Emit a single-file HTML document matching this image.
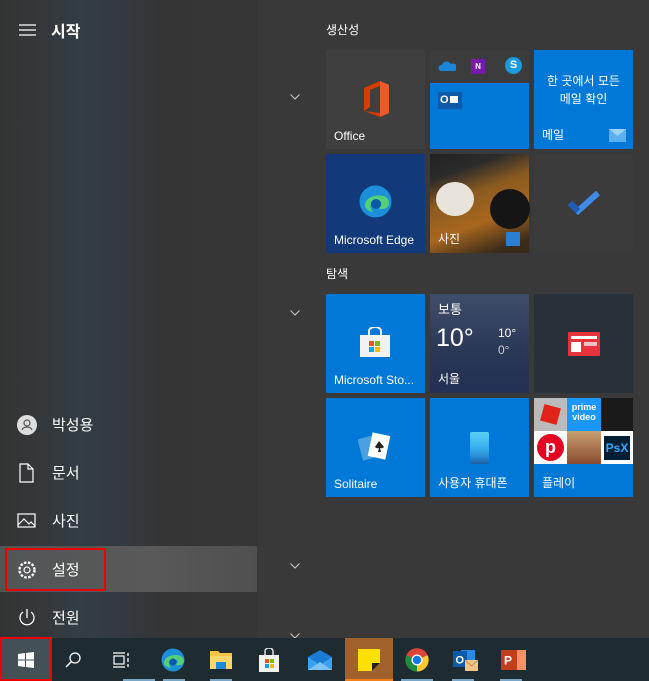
<!DOCTYPE html>
<html><head><meta charset="utf-8"><style>
*{margin:0;padding:0;box-sizing:border-box}
body{width:649px;height:681px;overflow:hidden;background:#393939;font-family:"Liberation Sans","Noto Sans CJK KR",sans-serif;color:#fff;position:relative}
.abs{position:absolute}
#left{left:0;top:0;width:257px;height:638px;background:linear-gradient(90deg,#333 0,#34393d 50px,#323d45 80px,#33393e 130px,#353535 160px,#363636 257px)}
#mid{left:257px;top:0;width:68px;height:638px;background:#393939}
.tile{position:absolute;width:99px;height:99px}
.lbl{position:absolute;left:8px;bottom:6px;font-size:12px;white-space:nowrap}
.item{position:absolute;left:0;width:257px;height:46px;font-size:15px}
.item span{position:absolute;left:52px;top:13px}
.item svg{position:absolute;left:17px;top:14px}
.chev{position:absolute;left:289px;color:#ccc;font-size:10px}
#tb{left:0;top:638px;width:649px;height:43px;background:#1e2b31}
.ti{position:absolute;top:0;width:48px;height:43px;display:flex;align-items:center;justify-content:center}
.ul{position:absolute;bottom:0;height:2px;background:#7aa6c8}
</style></head><body>
<div id="left" class="abs"></div>
<div id="mid" class="abs"></div>

<svg class="abs" style="left:19px;top:24px" width="17" height="12"><path d="M0 1H17M0 6H17M0 11H17" stroke="#fff" stroke-width="1.3"/></svg>
<div class="abs" style="left:51px;top:18px;font-size:16px;font-weight:bold">시작</div>

<svg class="abs" style="left:290px;top:94px" width="10" height="6"><path d="M0.5 0.5L5 5L9.5 0.5" stroke="#ccc" fill="none"/></svg>
<svg class="abs" style="left:290px;top:310px" width="10" height="6"><path d="M0.5 0.5L5 5L9.5 0.5" stroke="#ccc" fill="none"/></svg>
<svg class="abs" style="left:290px;top:563px" width="10" height="6"><path d="M0.5 0.5L5 5L9.5 0.5" stroke="#ccc" fill="none"/></svg>
<svg class="abs" style="left:290px;top:633px" width="10" height="6"><path d="M0.5 0.5L5 5L9.5 0.5" stroke="#ccc" fill="none"/></svg>

<!-- left items -->
<div class="item" style="top:401px"><svg width="20" height="20"><circle cx="10" cy="10" r="10" fill="#ddd"/><circle cx="10" cy="8" r="3" fill="none" stroke="#555" stroke-width="1.2"/><path d="M5 15C6 11 14 11 15 15" fill="none" stroke="#555" stroke-width="1.2"/></svg><span>박성용</span></div>
<div class="item" style="top:449px"><svg width="20" height="20"><path d="M3 1H11L16 6V19H3Z M11 1V6H16" fill="none" stroke="#fff" stroke-width="1.2"/></svg><span>문서</span></div>
<div class="item" style="top:497px"><svg width="20" height="20"><rect x="1" y="3" width="17" height="13" fill="none" stroke="#fff" stroke-width="1.2"/><path d="M1 14L7 8L12 13L14 11L18 15" fill="none" stroke="#fff" stroke-width="1.2"/></svg><span>사진</span></div>
<div class="item" style="top:546px;background:linear-gradient(90deg,#525556,#595959 150px,#4f4f4f)"><svg width="20" height="20"><circle cx="10" cy="10" r="3" fill="none" stroke="#fff" stroke-width="1.2"/><circle cx="10" cy="10" r="7.5" fill="none" stroke="#fff" stroke-width="2.4" stroke-dasharray="2.5 1.5"/></svg><span>설정</span></div>
<div class="abs" style="left:5px;top:548px;width:101px;height:43px;border:2px solid #e00"></div>
<div class="item" style="top:594px"><svg width="20" height="20"><path d="M6 4A7 7 0 1 0 14 4" fill="none" stroke="#fff" stroke-width="1.3"/><path d="M10 1V10" stroke="#fff" stroke-width="1.3"/></svg><span>전원</span></div>

<!-- group headers -->
<div class="abs" style="left:326px;top:21px;font-size:12px">생산성</div>
<div class="abs" style="left:326px;top:265px;font-size:12px">탐색</div>

<!-- row1 -->
<div class="tile" style="left:326px;top:50px;background:#3f3f3f">
<svg class="abs" style="left:34px;top:30px" width="32" height="38"><path d="M4 8L20 1L29 5V33L20 37L4 31L20 33V6L10 10V27L4 31Z" fill="#d83b01"/><path d="M20 1L29 5V33L20 37Z" fill="#eb5a29"/></svg>
<div class="lbl">Office</div></div>
<div class="tile" style="left:430px;top:50px;background:#0078d7">
<div class="abs" style="left:0;top:0;width:99px;height:33px;background:#3c3c3c"></div>
<svg class="abs" style="left:8px;top:11px" width="18" height="10"><path d="M3 10A3 3 0 0 1 4 4A5 5 0 0 1 13 3A4 4 0 0 1 17 10Z" fill="#1a86d9"/></svg>
<div class="abs" style="left:41px;top:9px;width:14px;height:15px;background:#7719aa;font-size:8px;font-weight:bold;text-align:center;line-height:15px">N</div>
<div class="abs" style="left:75px;top:7px;width:17px;height:17px;border-radius:50%;background:#1a9be0;font-size:11px;font-weight:bold;text-align:center;line-height:17px">S</div>
<div class="abs" style="left:8px;top:42px;width:24px;height:17px;background:#0f5aa8;font-size:11px;font-weight:bold;padding-left:2px;line-height:17px">O<span style="display:inline-block;width:8px;height:7px;background:#fff;margin-left:1px"></span></div>
</div>
<div class="tile" style="left:534px;top:50px;background:#0078d7">
<div class="abs" style="left:0;top:22px;width:99px;text-align:center;font-size:12px;line-height:18px">한 곳에서 모든<br>메일 확인</div>
<div class="lbl">메일</div>
<svg class="abs" style="left:75px;top:79px" width="17" height="13"><rect width="17" height="13" fill="#5ab0f0"/><path d="M0 0L8.5 7L17 0" fill="#9dd3fa"/></svg></div>

<!-- row2 -->
<div class="tile" style="left:326px;top:154px;background:#123a7a">
<svg class="abs" style="left:33px;top:31px" width="33" height="33"><circle cx="16.5" cy="16.5" r="16" fill="#1b8fd8"/><path d="M6 20C6 10 28 6 30 17C31 24 22 26 18 22C24 22 24 15 17 15C11 15 10 22 14 27C8 26 6 23 6 20Z" fill="#54d078"/><circle cx="17" cy="19" r="5" fill="#0c59a8"/></svg>
<div class="lbl">Microsoft Edge</div></div>
<div class="tile" style="left:430px;top:154px;background:linear-gradient(160deg,#222 0,#2b2b2b 20%,#8a5a20 40%,#a8671e 65%,#3a2a1a 90%)">
<div class="abs" style="left:6px;top:28px;width:38px;height:34px;border-radius:50%;background:#e8e4dc"></div>
<div class="abs" style="left:60px;top:35px;width:40px;height:40px;border-radius:50%;background:#151515"></div>
<div class="lbl">사진</div>
<div class="abs" style="left:76px;top:78px;width:14px;height:14px;background:#2a7fd0"></div></div>
<div class="tile" style="left:534px;top:154px;background:#3b3b3b">
<svg class="abs" style="left:34px;top:37px" width="32" height="24"><path d="M2 12L10 20L30 2" fill="none" stroke="#3d8ce8" stroke-width="6"/><path d="M2 12L10 20" stroke="#1c5bb8" stroke-width="6"/></svg></div>

<!-- row3 -->
<div class="tile" style="left:326px;top:294px;background:#0078d7">
<svg class="abs" style="left:33px;top:33px" width="32" height="30"><path d="M10 8V4A6 4 0 0 1 22 4V8" fill="none" stroke="#eee" stroke-width="2"/><rect x="1" y="8" width="30" height="22" fill="#f2f2f2"/><rect x="10" y="14" width="5" height="5" fill="#f25022"/><rect x="16" y="14" width="5" height="5" fill="#7fba00"/><rect x="10" y="20" width="5" height="5" fill="#00a4ef"/><rect x="16" y="20" width="5" height="5" fill="#ffb900"/></svg>
<div class="lbl">Microsoft Sto...</div></div>
<div class="tile" style="left:430px;top:294px;background:linear-gradient(180deg,#3f4d6a,#2a3656 60%,#243054)">
<div class="abs" style="left:8px;top:5px;font-size:13px">보통</div>
<div class="abs" style="left:6px;top:30px;font-size:25px">10°</div>
<div class="abs" style="left:68px;top:32px;font-size:12px">10°</div>
<div class="abs" style="left:68px;top:49px;font-size:12px;color:#ccc">0°</div>
<div class="lbl">서울</div></div>
<div class="tile" style="left:534px;top:294px;background:#283039">
<svg class="abs" style="left:34px;top:38px" width="32" height="24"><rect width="32" height="24" rx="1" fill="#e8323c"/><rect x="3" y="10" width="10" height="10" fill="#fff"/><rect x="3" y="4" width="26" height="3" fill="#fff"/><rect x="16" y="10" width="13" height="4" fill="#f8c0c4"/></svg></div>

<!-- row4 -->
<div class="tile" style="left:326px;top:398px;background:#0078d7">
<svg class="abs" style="left:32px;top:33px" width="36" height="32"><rect x="2" y="6" width="17" height="22" fill="#4aa0e0" transform="rotate(-15 10 17)"/><rect x="12" y="3" width="18" height="24" fill="#fff" transform="rotate(12 21 15)"/><path d="M21 10L17 16C19 18 21 17 21 17L20 21H23L22 17C22 17 24 18 26 16Z" fill="#222"/></svg>
<div class="lbl">Solitaire</div></div>
<div class="tile" style="left:430px;top:398px;background:#0078d7">
<div class="abs" style="left:40px;top:34px;width:19px;height:32px;border-radius:2px;background:linear-gradient(#5ad0f5 0,#3bb2ee 45%,#2a8fd7 75%,#1c5fa6 100%)"></div>
<div class="lbl">사용자 휴대폰</div></div>
<div class="tile" style="left:534px;top:398px;background:#0078d7">
<div class="abs" style="left:0;top:0;width:33px;height:33px;background:#bbb"><div style="position:absolute;left:8px;top:8px;width:17px;height:17px;background:#e2231a;transform:rotate(15deg)"></div></div>
<div class="abs" style="left:33px;top:0;width:34px;height:33px;background:#1a98ff;font-size:9px;text-align:center;line-height:10px;padding-top:4px;font-weight:bold">prime<br>video</div>
<div class="abs" style="left:67px;top:0;width:32px;height:33px;background:#1a1a1a"></div>
<div class="abs" style="left:0;top:33px;width:33px;height:33px;background:#fff"><div style="position:absolute;left:3px;top:3px;width:27px;height:27px;border-radius:50%;background:#e60023;color:#fff;font-weight:bold;text-align:center;line-height:27px;font-size:18px">p</div></div>
<div class="abs" style="left:33px;top:33px;width:34px;height:33px;background:linear-gradient(#c8a070,#8a4a30)"></div>
<div class="abs" style="left:67px;top:33px;width:32px;height:33px;background:#fff"><div style="position:absolute;left:3px;top:5px;width:26px;height:24px;background:#001e36;color:#31a8ff;font-weight:bold;font-size:12px;text-align:center;line-height:24px">PsX</div></div>
<div class="lbl">플레이</div></div>

<!-- taskbar -->
<div id="tb" class="abs">
<div class="ti" style="left:0;width:52px;background:#435157"><svg width="16" height="16"><path d="M0 2L7 1V7.5H0ZM8 1L16 0V7.5H8ZM0 8.5H7V15L0 14ZM8 8.5H16V16L8 15Z" fill="#fff"/></svg></div>
<div class="abs" style="left:0;top:-1px;width:52px;height:44px;border:2px solid #e00"></div>
<div class="ti" style="left:49px"><svg width="16" height="16"><circle cx="10" cy="6" r="5" fill="none" stroke="#fff" stroke-width="1.3"/><path d="M6.5 9.5L1 15" stroke="#fff" stroke-width="1.5"/></svg></div>
<div class="ti" style="left:97px"><svg width="18" height="16"><rect x="2" y="4" width="10" height="8" fill="none" stroke="#fff" stroke-width="1.2"/><path d="M1 1H13M1 15H13M16 1V4M16 6V10M16 12V15" stroke="#fff" stroke-width="1.3"/></svg></div>
<div class="ti" style="left:149px"><svg width="24" height="24"><circle cx="12" cy="12" r="11.5" fill="#1b8fd8"/><path d="M3 15C3 6 21 4 23 12C23 17 17 19 14 16C18 16 18 11 12 11C7 11 7 16 10 20C5 19 3 17 3 15Z" fill="#54d078"/><circle cx="12" cy="14" r="3.5" fill="#0c59a8"/></svg></div>
<div class="ti" style="left:197px"><svg width="24" height="22"><path d="M1 2H9L11 4H23V20H1Z" fill="#f5c445"/><rect x="1" y="7" width="22" height="13" fill="#fbd76a"/><rect x="7" y="13" width="10" height="7" fill="#1e88d9"/></svg></div>
<div class="ti" style="left:245px"><svg width="22" height="24"><path d="M7 7V3A4 3 0 0 1 15 3V7" fill="none" stroke="#ddd" stroke-width="1.5"/><rect x="1" y="7" width="20" height="17" fill="#f2f2f2"/><rect x="7" y="11" width="4" height="4" fill="#f25022"/><rect x="12" y="11" width="4" height="4" fill="#7fba00"/><rect x="7" y="16" width="4" height="4" fill="#00a4ef"/><rect x="12" y="16" width="4" height="4" fill="#ffb900"/></svg></div>
<div class="ti" style="left:296px"><svg width="24" height="20"><path d="M0 7L12 0L24 7V20H0Z" fill="#1c7bd4"/><path d="M0 7L12 15L24 7V20H0Z" fill="#3aa0f0"/><path d="M0 20L12 12L24 20Z" fill="#7cc3f8"/></svg></div>
<div class="ti" style="left:345px;background:#a0612d"><svg width="22" height="22"><path d="M0 0H22V14L14 22H0Z" fill="#fce100"/><path d="M14 22L22 14H14Z" fill="#222"/></svg></div>
<div class="abs" style="left:345px;top:41px;width:48px;height:2px;background:#f0801a"></div>
<div class="ti" style="left:393px"><svg width="24" height="24"><circle cx="12" cy="12" r="11.5" fill="#db4437"/><path d="M12 12L22.5 7A11.5 11.5 0 0 1 12 23.5Z" fill="#fcc934"/><path d="M12 12L12 23.5A11.5 11.5 0 0 1 1.5 7Z" fill="#1e8e3e"/><path d="M12 12L1.5 7A11.5 11.5 0 0 1 22.5 7Z" fill="#db4437"/><circle cx="12" cy="12" r="5.5" fill="#fff"/><circle cx="12" cy="12" r="4.2" fill="#1a73e8"/></svg></div>
<div class="ti" style="left:442px"><svg width="26" height="24"><rect x="8" y="2" width="14" height="12" fill="#2a8ae0"/><rect x="0" y="3" width="14" height="16" fill="#0f5aa8"/><text x="2.5" y="15.5" font-size="11" font-weight="bold" fill="#fff" font-family="Liberation Sans">O</text><rect x="12" y="12" width="13" height="11" fill="#f2c48e"/><path d="M12 12L18.5 18L25 12" fill="none" stroke="#c89050"/></svg></div>
<div class="ti" style="left:490px"><svg width="26" height="24"><rect x="10" y="2" width="15" height="20" fill="#ff8f6b"/><rect x="0" y="2" width="16" height="20" fill="#c43e1c"/><text x="3" y="16.5" font-size="12" font-weight="bold" fill="#fff" font-family="Liberation Sans">P</text></svg></div>
<div class="ul" style="left:123px;width:32px"></div>
<div class="ul" style="left:163px;width:22px"></div>
<div class="ul" style="left:210px;width:22px"></div>
<div class="ul" style="left:401px;width:32px"></div>
<div class="ul" style="left:452px;width:22px"></div>
<div class="ul" style="left:500px;width:22px"></div>
</div>
</body></html>
